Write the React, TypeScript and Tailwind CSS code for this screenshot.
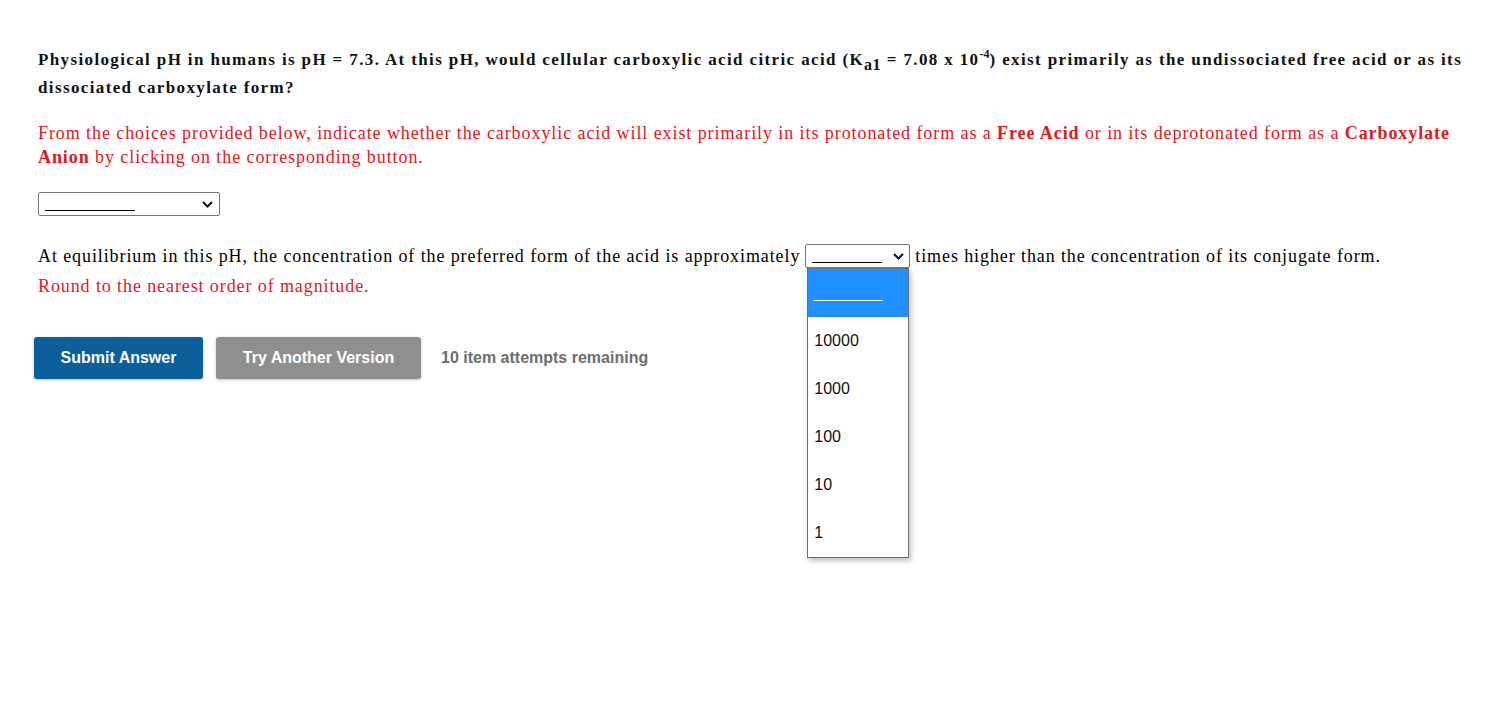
import React from 'react';

const Chevron: React.FC = () => (
  <svg width="11" height="7" viewBox="0 0 11 7" className="shrink-0">
    <path d="M1 1l4.5 4.5L10 1" fill="none" stroke="#111" strokeWidth="2" />
  </svg>
);

const Blank: React.FC<{ w: string; color?: string }> = ({ w, color = 'bg-black' }) => (
  <span className={`block h-px ${w} ${color}`} />
);

const App: React.FC = () => {
  const options = ['10000', '1000', '100', '10', '1'];

  return (
    <div className="min-h-screen bg-white font-['Liberation_Serif',serif] text-black">
      <div className="px-[38px] pt-[46px]">
        {/* Question */}
        <p className="text-[17px] leading-[28px] font-bold tracking-[1.37px] text-[#111]">
          Physiological pH in humans is pH = 7.3. At this pH, would cellular carboxylic acid citric acid (K
          <sub className="relative top-[5px] text-[16px] tracking-[0.5px]">a1</sub> = 7.08 x 10
          <sup className="relative top-[-7px] text-[12px] tracking-normal">-4</sup>) exist primarily as the undissociated free acid or as its dissociated carboxylate form?
        </p>

        {/* Instruction */}
        <p className="mt-[19px] text-[18px] leading-[24px] tracking-[0.92px] text-[#e3161b]">
          From the choices provided below, indicate whether the carboxylic acid will exist primarily in its protonated form as a{' '}
          <b>Free Acid</b> or in its deprotonated form as a <b>Carboxylate Anion</b> by clicking on the corresponding button.
        </p>

        <div className="mt-[23px] flex h-[24px] w-[182px] items-center justify-between rounded-[2px] border border-[#767676] bg-white pl-[6px] pr-[6px]">
          <span className="mt-[12px]">
            <Blank w="w-[90px]" />
          </span>
          <Chevron />
        </div>

        {/* Equilibrium line */}
        <div className="mt-[28px] flex items-center text-[18px] leading-[24px] tracking-[0.9px]">
          <span>At equilibrium in this pH, the concentration of the preferred form of the acid is approximately</span>
          <div className="relative mx-[5px] tracking-normal">
            <div className="flex h-[24px] w-[105px] items-center justify-between rounded-[2px] border border-[#767676] bg-white pl-[6px] pr-[5px]">
              <span className="mt-[12px]">
                <Blank w="w-[70px]" />
              </span>
              <Chevron />
            </div>
            {/* Open options list */}
            <div className="absolute left-[2px] top-[24px] z-10 w-[102px] border border-[#6f6f6f] bg-white font-['Liberation_Sans',Arial,sans-serif] text-[16px] text-[#111] shadow-[2px_3px_5px_rgba(0,0,0,0.25)]">
              <div className="flex h-[48px] items-center bg-[#1e90ff] px-[5px]">
                <span className="mt-[14px]">
                  <Blank w="w-[70px]" color="bg-white" />
                </span>
              </div>
              {options.map(o => (
                <div key={o} className="flex h-[48px] items-center px-[6px]">
                  {o}
                </div>
              ))}
            </div>
          </div>
          <span>times higher than the concentration of its conjugate form.</span>
        </div>
        <p className="mt-[6px] text-[18px] leading-[24px] tracking-[0.9px] text-[#e3161b]">Round to the nearest order of magnitude.</p>

        {/* Actions */}
        <div className="-ml-[4px] mt-[39px] flex items-center gap-[13px] font-['Liberation_Sans',Arial,sans-serif] text-[16px] font-bold">
          <button className="h-[42px] w-[169px] rounded-[3px] bg-[#0b5f9a] text-white shadow-[0_1px_3px_rgba(0,0,0,0.25)]">
            Submit Answer
          </button>
          <button className="h-[42px] w-[205px] rounded-[3px] bg-[#8f8f8f] text-white shadow-[0_1px_3px_rgba(0,0,0,0.25)]">
            Try Another Version
          </button>
          <span className="ml-[7px] text-[#6d6d6d]">10 item attempts remaining</span>
        </div>
      </div>
    </div>
  );
};

export default App;
